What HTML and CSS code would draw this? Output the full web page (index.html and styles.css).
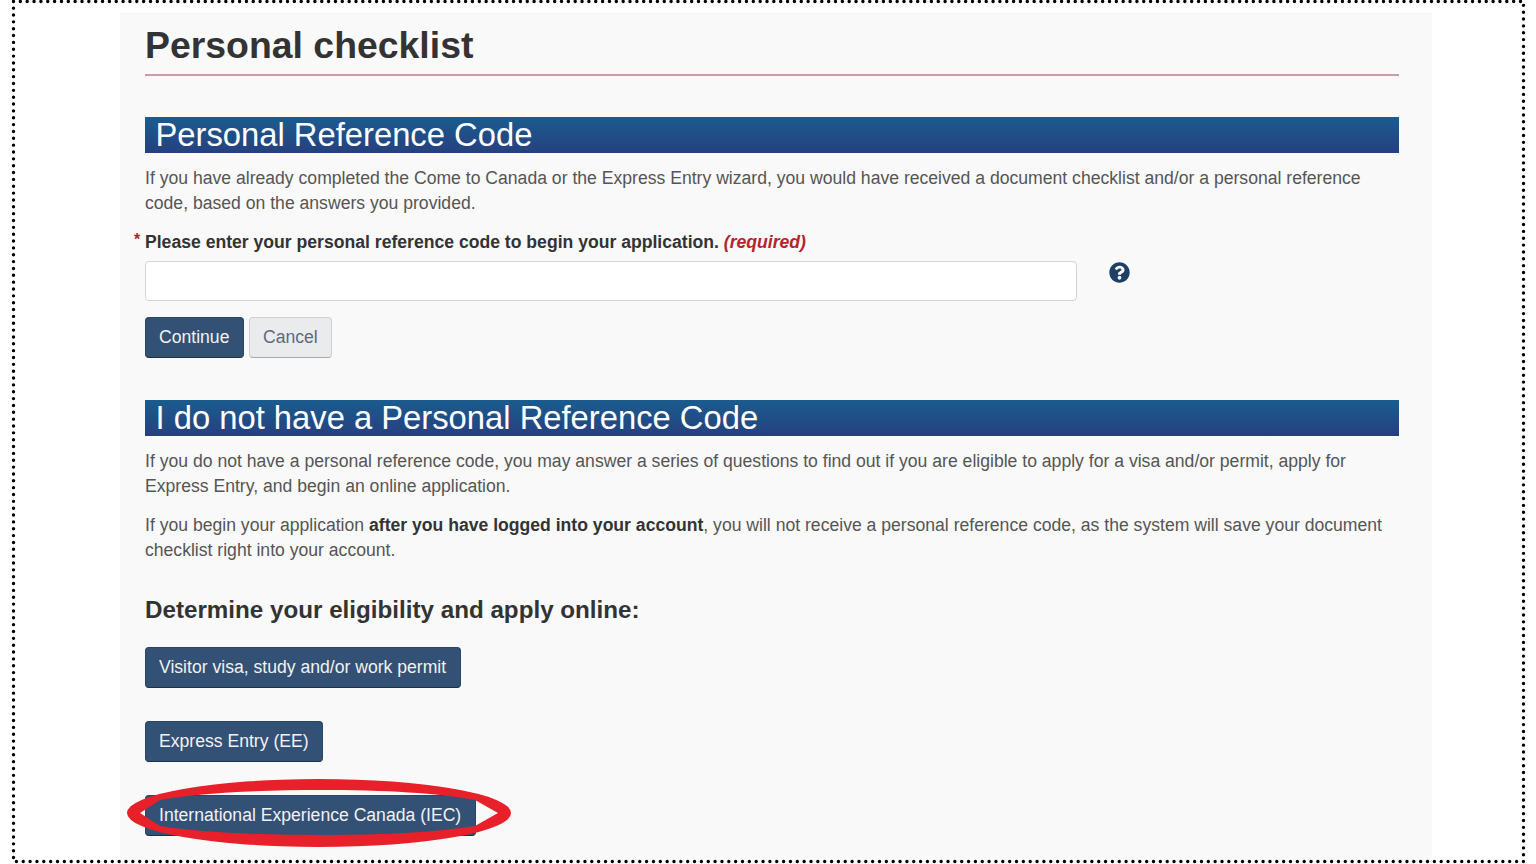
FILE: index.html
```html
<!DOCTYPE html>
<html lang="en">
<head>
<meta charset="utf-8">
<title>Personal checklist</title>
<link rel="stylesheet" href="styles.css">
</head>
<body>
<div class="page">
  <main class="panel">
    <h1 class="title">Personal checklist</h1>

    <section class="section section-code">
      <h2 class="band">Personal Reference Code</h2>
      <p class="copy">If you have already completed the Come to Canada or the Express Entry wizard, you would have received a document checklist and/or a personal reference code, based on the answers you provided.</p>
      <label class="field-label" for="code"><span class="star">*</span>Please enter your personal reference code to begin your application. <em class="required">(required)</em></label>
      <div class="field-row">
        <input class="field" id="code" type="text">
        <svg class="help" viewBox="0 0 512 512" aria-hidden="true"><path d="M504 256c0 136.997-111.043 248-248 248S8 392.997 8 256C8 119.083 119.043 8 256 8s248 111.083 248 248zM262.655 90c-54.497 0-89.255 22.957-116.549 63.758-3.536 5.286-2.353 12.415 2.715 16.258l34.699 26.31c5.205 3.947 12.621 3.008 16.665-2.122 17.864-22.658 30.113-35.797 57.303-35.797 20.429 0 45.698 13.148 45.698 32.958 0 14.976-12.363 22.667-32.534 33.976C247.128 238.528 216 254.941 216 296v4c0 6.627 5.373 12 12 12h56c6.627 0 12-5.373 12-12v-1.333c0-28.462 83.186-29.647 83.186-106.667 0-58.002-60.165-102-116.531-102zM256 338c-25.365 0-46 20.635-46 46 0 25.364 20.635 46 46 46s46-20.636 46-46c0-25.365-20.635-46-46-46z"/></svg>
      </div>
      <div class="actions">
        <button class="btn btn-primary" type="button">Continue</button>
        <button class="btn btn-default" type="button">Cancel</button>
      </div>
    </section>

    <section class="section section-none">
      <h2 class="band">I do not have a Personal Reference Code</h2>
      <p class="copy">If you do not have a personal reference code, you may answer a series of questions to find out if you are eligible to apply for a visa and/or permit, apply for Express Entry, and begin an online application.</p>
      <p class="copy copy-next">If you begin your application <strong class="strong">after you have logged into your account</strong>, you will not receive a personal reference code, as the system will save your document checklist right into your account.</p>
      <h3 class="subhead">Determine your eligibility and apply online:</h3>
      <div class="stack">
        <button class="btn btn-primary" type="button">Visitor visa, study and/or work permit</button>
        <button class="btn btn-primary" type="button">Express Entry (EE)</button>
        <div class="circled">
          <button class="btn btn-primary" type="button">International Experience Canada (IEC)</button>
          <svg class="ring" viewBox="0 0 384 68" aria-hidden="true"><path fill-rule="evenodd" d="M0 34A192 34 0 1 1 384 34A192 34 0 1 1 0 34ZM13 34L33 21C70 14 130 11 193 11C260 11 310 14 348 21L371 34L348 47C310 53 260 56 193 56C130 56 70 53 33 47Z"/></svg>
        </div>
      </div>
    </section>
  </main>
  <svg class="frame" viewBox="0 0 1536 864" aria-hidden="true"><rect x="13.5" y="1.5" width="1510" height="860"/></svg>
</div>
</body>
</html>
```

FILE: styles.css
```css
* { box-sizing: border-box; }
html, body { margin: 0; height: 100%; background: #fff; overflow: hidden; }
body { font-family: "Liberation Sans", Arial, sans-serif; color: #333; }

.page { position: relative; width: 1536px; height: 864px; padding: 12px 104px 0 120px; }
.panel { height: 852px; background: #f9f9f9; padding: 0 33px 0 25px; }

.title {
  margin: 0; height: 64px; padding-top: 13px;
  font-size: 37.4px; line-height: 41px; font-weight: 700; color: #333;
  border-bottom: 2px solid #cb9ca1;
}
.section-code { margin-top: 41px; }
.section-none { margin-top: 42px; }

.band {
  margin: 0; height: 36px; padding-left: 10.5px;
  font-size: 32.75px; line-height: 35px; font-weight: 400; color: #fff;
  background: linear-gradient(#1a5c8f, #26407f);
}
.copy { margin: 13px 0 0; font-size: 17.6px; line-height: 25px; color: #555; }
.copy-next { margin-top: 14px; }
.strong { color: #333; }

.field-label { display: block; position: relative; margin-top: 14px; font-size: 17.6px; line-height: 25px; font-weight: 700; color: #333; }
.star { position: absolute; left: -11px; top: -3px; color: #b5232f; font-size: 16px; }
.required { color: #b5232f; }

.field-row { display: flex; align-items: flex-start; margin-top: 6px; }
.field { width: 932px; height: 40px; background: #fff; border: 1px solid #d4d4d4; border-radius: 4px; }
.help { width: 21px; height: 21px; margin: 1px 0 0 32px; fill: #1f3f66; }

.btn {
  display: block; height: 41px; padding: 0 13.5px 0 13px;
  font-family: inherit; font-size: 17.6px; border-radius: 4px; white-space: nowrap;
}
.btn-primary { background: #335075; color: #f2f2f2; border: 1px solid #2a4568; border-bottom-color: #1d3048; }
.btn-default { background: #eaebed; color: #5c6a80; border: 1px solid #d0d0d0; border-bottom-color: #a8a8a8; }

.actions { display: flex; gap: 5px; margin-top: 16px; }

.subhead { margin: 30px 0 0; font-size: 24.2px; line-height: 34px; font-weight: 700; color: #333; }
.stack { display: flex; flex-direction: column; align-items: flex-start; gap: 33px; margin-top: 20px; }
.circled { position: relative; }
.ring { position: absolute; left: -18px; top: -16px; width: 384px; height: 68px; fill: #e8202a; }

.frame { position: absolute; left: 0; top: 0; width: 1536px; height: 864px; fill: none; stroke: #000; stroke-width: 3.4; stroke-linecap: round; stroke-dasharray: 0 6.85; pointer-events: none; }
```
